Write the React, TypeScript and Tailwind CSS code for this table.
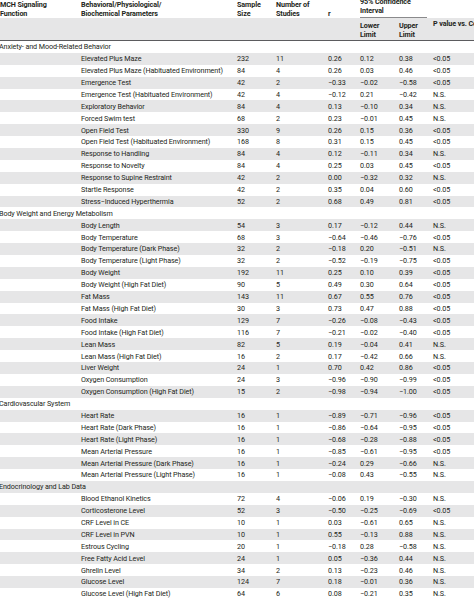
type Row = [string, string, string, string, string, string, string];

interface Section {
  title: string;
  rows: Row[];
}

const sections: Section[] = [
  {
    title: "Anxiety- and Mood-Related Behavior",
    rows: [
      ["Elevated Plus Maze", "232", "11", "0.26", "0.12", "0.38", "<0.05"],
      ["Elevated Plus Maze (Habituated Environment)", "84", "4", "0.26", "0.03", "0.46", "<0.05"],
      ["Emergence Test", "42", "2", "−0.33", "−0.02", "−0.58", "<0.05"],
      ["Emergence Test (Habituated Environment)", "42", "4", "−0.12", "0.21", "−0.42", "N.S."],
      ["Exploratory Behavior", "84", "4", "0.13", "−0.10", "0.34", "N.S."],
      ["Forced Swim test", "68", "2", "0.23", "−0.01", "0.45", "N.S."],
      ["Open Field Test", "330", "9", "0.26", "0.15", "0.36", "<0.05"],
      ["Open Field Test (Habituated Environment)", "168", "8", "0.31", "0.15", "0.45", "<0.05"],
      ["Response to Handling", "84", "4", "0.12", "−0.11", "0.34", "N.S."],
      ["Response to Novelty", "84", "4", "0.25", "0.03", "0.45", "<0.05"],
      ["Response to Supine Restraint", "42", "2", "0.00", "−0.32", "0.32", "N.S."],
      ["Startle Response", "42", "2", "0.35", "0.04", "0.60", "<0.05"],
      ["Stress−Induced Hyperthermia", "52", "2", "0.68", "0.49", "0.81", "<0.05"],
    ],
  },
  {
    title: "Body Weight and Energy Metabolism",
    rows: [
      ["Body Length", "54", "3", "0.17", "−0.12", "0.44", "N.S."],
      ["Body Temperature", "68", "3", "−0.64", "−0.46", "−0.76", "<0.05"],
      ["Body Temperature (Dark Phase)", "32", "2", "−0.18", "0.20", "−0.51", "N.S."],
      ["Body Temperature (Light Phase)", "32", "2", "−0.52", "−0.19", "−0.75", "<0.05"],
      ["Body Weight", "192", "11", "0.25", "0.10", "0.39", "<0.05"],
      ["Body Weight (High Fat Diet)", "90", "5", "0.49", "0.30", "0.64", "<0.05"],
      ["Fat Mass", "143", "11", "0.67", "0.55", "0.76", "<0.05"],
      ["Fat Mass (High Fat Diet)", "30", "3", "0.73", "0.47", "0.88", "<0.05"],
      ["Food Intake", "129", "7", "−0.26", "−0.08", "−0.43", "<0.05"],
      ["Food Intake (High Fat Diet)", "116", "7", "−0.21", "−0.02", "−0.40", "<0.05"],
      ["Lean Mass", "82", "5", "0.19", "−0.04", "0.41", "N.S."],
      ["Lean Mass (High Fat Diet)", "16", "2", "0.17", "−0.42", "0.66", "N.S."],
      ["Liver Weight", "24", "1", "0.70", "0.42", "0.86", "<0.05"],
      ["Oxygen Consumption", "24", "3", "−0.96", "−0.90", "−0.99", "<0.05"],
      ["Oxygen Consumption (High Fat Diet)", "15", "2", "−0.98", "−0.94", "−1.00", "<0.05"],
    ],
  },
  {
    title: "Cardiovascular System",
    rows: [
      ["Heart Rate", "16", "1", "−0.89", "−0.71", "−0.96", "<0.05"],
      ["Heart Rate (Dark Phase)", "16", "1", "−0.86", "−0.64", "−0.95", "<0.05"],
      ["Heart Rate (Light Phase)", "16", "1", "−0.68", "−0.28", "−0.88", "<0.05"],
      ["Mean Arterial Pressure", "16", "1", "−0.85", "−0.61", "−0.95", "<0.05"],
      ["Mean Arterial Pressure (Dark Phase)", "16", "1", "−0.24", "0.29", "−0.66", "N.S."],
      ["Mean Arterial Pressure (Light Phase)", "16", "1", "−0.08", "0.43", "−0.55", "N.S."],
    ],
  },
  {
    title: "Endocrinology and Lab Data",
    rows: [
      ["Blood Ethanol Kinetics", "72", "4", "−0.06", "0.19", "−0.30", "N.S."],
      ["Corticosterone Level", "52", "3", "−0.50", "−0.25", "−0.69", "<0.05"],
      ["CRF Level in CE", "10", "1", "0.03", "−0.61", "0.65", "N.S."],
      ["CRF Level in PVN", "10", "1", "0.55", "−0.13", "0.88", "N.S."],
      ["Estrous Cycling", "20", "1", "−0.18", "0.28", "−0.58", "N.S."],
      ["Free Fatty Acid Level", "24", "1", "0.05", "−0.36", "0.44", "N.S."],
      ["Ghrelin Level", "34", "2", "0.13", "−0.23", "0.46", "N.S."],
      ["Glucose Level", "124", "7", "0.18", "−0.01", "0.36", "N.S."],
      ["Glucose Level (High Fat Diet)", "64", "6", "0.08", "−0.21", "0.35", "N.S."],
    ],
  },
];

const cols = "grid grid-cols-[81px_156px_39px_52px_32px_39px_34px_80px]";

export default function App() {
  // flatten sections + rows so the stripe parity runs across the whole body
  const lines: { title?: string; row?: Row }[] = [];
  sections.forEach((s) => {
    lines.push({ title: s.title });
    s.rows.forEach((r) => lines.push({ row: r }));
  });

  return (
    <div className="w-[474px] h-[606px] overflow-hidden bg-white text-[#231f20] font-['Roboto',sans-serif] text-[7.2px] tracking-[-0.1px]">
      <div className="w-[520px]">
        {/* header, first line */}
        <div className={`${cols} h-[18px] font-bold leading-[9px]`}>
          <div>MCH Signaling<br />Function</div>
          <div>Behavioral/Physiological/<br />Biochemical Parameters</div>
          <div>Sample<br />Size</div>
          <div>Number of<br />Studies</div>
          <div className="pt-[9px]">r</div>
          <div className="col-span-2 mr-[6px] -mt-[3px] border-b border-[#8a8a8c] pb-[2px]">
            95% Confidence<br />Interval
          </div>
          <div />
        </div>
        {/* header, second line */}
        <div className={`${cols} h-[23px] bg-[#e6e6e7] font-bold leading-[8.5px] border-b border-[#5b5b5e]`}>
          <div />
          <div />
          <div />
          <div />
          <div />
          <div className="pt-[4px]">Lower<br />Limit</div>
          <div className="pt-[4px]">Upper<br />Limit</div>
          <div className="pt-[2px] whitespace-nowrap">P value vs. Control</div>
        </div>

        {lines.map((l, i) => (
          <div
            key={i}
            className={`${cols} h-[11.9px] items-center leading-none whitespace-nowrap ${
              i % 2 === 1 ? "bg-[#e6e6e7]" : "bg-white"
            }`}
          >
            {l.title ? (
              <div className="col-span-8 -ml-[1px]">{l.title}</div>
            ) : (
              <>
                <div />
                {l.row!.map((c, j) => (
                  <div key={j}>{c}</div>
                ))}
              </>
            )}
          </div>
        ))}
      </div>
    </div>
  );
}
